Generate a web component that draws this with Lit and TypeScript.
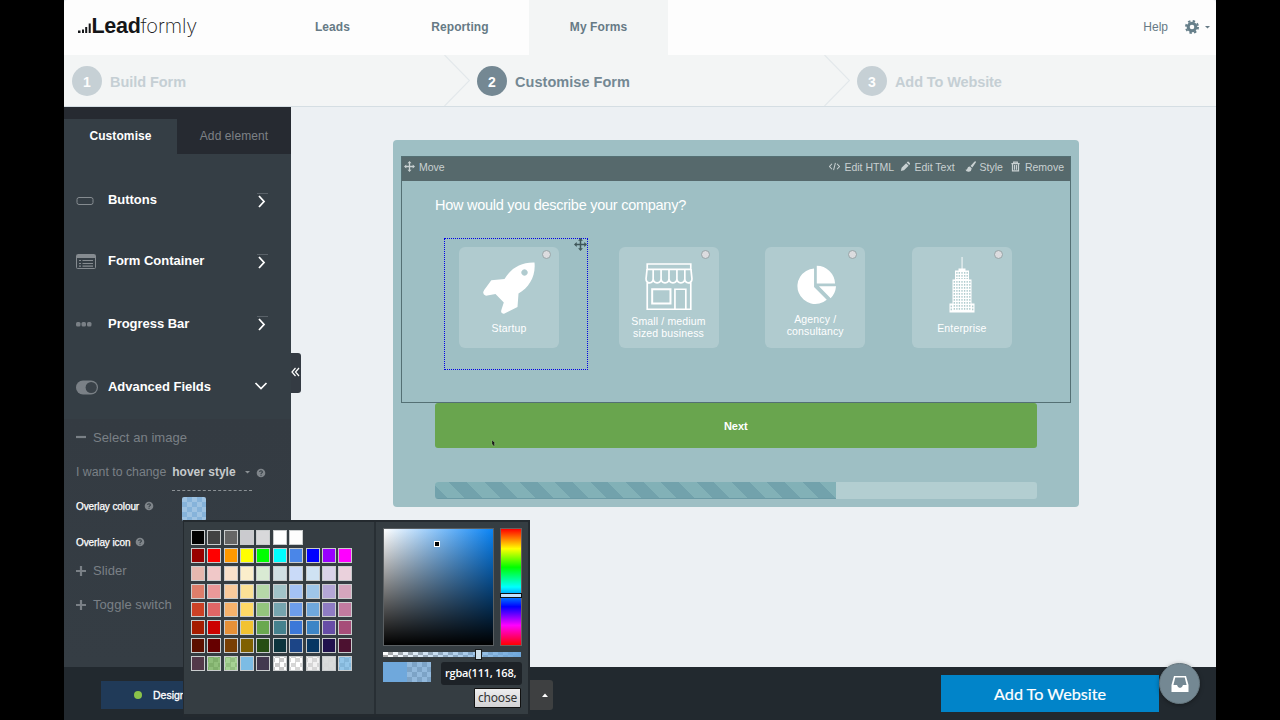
import { LitElement, html, css, svg } from "lit";
import { customElement } from "lit/decorators.js";
import { classMap } from "lit/directives/class-map.js";

const SWATCHES: string[][] = [
  ["#000000", "#434343", "#666666", "#cacace", "#d8d8da", "#ffffff", "#fdfdfd"],
  ["#980000", "#ff0000", "#ff9900", "#ffff00", "#00ff00", "#00ffff", "#4a86e8", "#0000ff", "#9900ff", "#ff00ff"],
  ["#e6b8af", "#f0c8c8", "#f8e1ca", "#fbeecb", "#d9ead3", "#d0e0e3", "#c9daf8", "#cfe2f3", "#d9d2e9", "#ead1dc"],
  ["#dd7e6b", "#ea9999", "#f9cb9c", "#fbe196", "#b6d7a8", "#a2c4c9", "#a4c2f4", "#9fc5e8", "#b4a7d6", "#d5a6bd"],
  ["#cc4125", "#e06666", "#f6b26b", "#ffd966", "#93c47d", "#76a5af", "#6d9eeb", "#6fa8dc", "#8e7cc3", "#c27ba0"],
  ["#a61c00", "#cc0000", "#e69138", "#f1c232", "#6aa84f", "#45818e", "#3c78d8", "#3d85c6", "#674ea7", "#a64d79"],
  ["#5b0f00", "#660000", "#783f04", "#7f6000", "#274e13", "#0c343d", "#1c4587", "#073763", "#20124d", "#4c1130"],
  ["#53394a", "rgba(106,168,79,.75)", "rgba(126,188,99,.68)", "#7cbce4", "#43394f", "rgba(255,255,255,.1)", "rgba(255,255,255,.3)", "rgba(230,230,230,.55)", "rgba(216,218,218,.94)", "rgba(111,178,224,.75)"],
];

const moveIcon = svg`<svg class="ico" viewBox="0 0 12 12"><path fill="currentColor" d="M6 0 8.2 2.5H6.7V5.3H9.5V3.8L12 6 9.5 8.2V6.7H6.7V9.5H8.2L6 12 3.8 9.5H5.3V6.7H2.5V8.2L0 6 2.5 3.8V5.3H5.3V2.5H3.8Z"/></svg>`;
const codeIcon = svg`<svg class="ico" viewBox="0 0 12 12"><path fill="none" stroke="currentColor" stroke-width="1.100" d="M3.3 3 .6 6l2.700 3M8.700 3l2.700 3-2.700 3M7 2 5 10"/></svg>`;
const pencilIcon = svg`<svg class="ico" viewBox="0 0 12 12"><path fill="currentColor" d="M1 11l.8-3.600L7 2.200l2.800 2.800L4.600 10.200ZM7.700 1.500l.9-.9q.6-.5 1.200 0l1.600 1.600q.5.6 0 1.200l-.9.9Z"/></svg>`;
const brushIcon = svg`<svg class="ico" viewBox="0 0 12 12"><path fill="currentColor" d="M11.300.3q.9.500.5 1.400L8 7 6 5.400 10.200.7q.6-.6 1.100-.4ZM5.200 6.100l2.100 1.800Q7.500 11 4.300 11.700 1.500 12 .3 9.300q1.500.6 2-.700.7-2.500 2.900-2.500Z"/></svg>`;
const trashIcon = svg`<svg class="ico" viewBox="0 0 12 12"><path fill="none" stroke="currentColor" stroke-width="1.300" d="M1.500 2.800H10.500M4 2.500V1.200H8V2.500M2.700 3V10.800H9.300V3M4.900 4.300V9.500M7.100 4.300V9.500"/></svg>`;
const helpIcon = svg`<svg class="help" viewBox="0 0 10 10"><circle cx="5" cy="5" r="4.300" fill="#7f858a"/><path d="M3.600 4Q3.700 2.700 5 2.700T6.400 4C6.400 4.900 5 4.900 5 6M5 6.800V7.800" fill="none" stroke="#353e45" stroke-width="1.100"/></svg>`;

const rocket = svg`<svg class="art" viewBox="0 0 52 52"><path fill="#fff" fill-rule="evenodd" d="M51.500.4C53 14 46 26 35.500 31.500L34.500 45 21 51.700Q17 52 18.500 47.500L20.800 40.500 12.500 32 3 33.800Q-1.500 32 1.200 28L8.300 18.300 21.500 17C28 6 38 0 51.500.4ZM41.500 7.300a3.200 3.200 0 1 0 .01 0Z"/></svg>`;
const store = svg`<svg class="art" viewBox="0 0 48 48"><g fill="none" stroke="#fff" stroke-width="1.700"><path d="M2 6.500V1H46V6.500ZM1.800 6.500.8 16q0 4 3.600 4T8 16q0 4 4 4t4-4q0 4 4 4t4-4q0 4 4 4t4-4q0 4 4 4t4-4q0 4 3.600 4t3.600-4L46.200 6.500M8 16V6.500M16 16V6.500M24 16V6.500M32 16V6.500M40 16V6.500M2 19V46.800H46V19"/><path stroke-width="2" d="M7 26.500H25.500V41H7Z"/><path d="M30 46.500V26.500H41V46.500"/></g></svg>`;
const pie = svg`<svg class="art" viewBox="0 0 42 40"><path fill="#fff" d="M18.500 3V22L31.500 35A18.200 18.200 0 1 1 18.500 3ZM21.300.3A19 19 0 0 1 40 18.400H21.300ZM23.500 21.300H41Q40.500 28.500 35.500 33.500Z"/></svg>`;
const tower = svg`<svg class="art" viewBox="0 0 26 56"><path fill="#fff" d="M12.600 0h.9V11.500H16.500V13.500H20V22.500H22.500V46.500H25.500V55.500H.5V46.500H3.500V22.500H6V13.500H9.500V11.500H12.600Z"/><path d="M7.900 15V22M10.300 15V22M13 15V22M15.700 15V22M18.200 15V22M5.300 24V54M7.900 24V54M10.400 24V54M13 24V54M15.600 24V54M18.200 24V54M20.800 24V54M2.300 48.500V54M23.700 48.500V54" stroke="#b0ccce" stroke-width="1.300" stroke-dasharray="1.700 1.300"/></svg>`;

@customElement("colour-picker")
export class ColourPicker extends LitElement {
  static styles = css`
    :host { display: flex; box-sizing: border-box; width: 347px; height: 197px; border: 2px solid #242a2f; border-left-width: 1px; border-bottom-width: 3px; background: #353d42; }
    .palette { width: 192px; box-sizing: border-box; border-right: 2px solid #282f34; padding: 8px 0 0 7px; display: flex; flex-direction: column; gap: 3px; }
    .row { display: flex; gap: 2.370px; }
    .sw { width: 14px; height: 15px; box-sizing: border-box; border: 1px solid #c9cccd; background: repeating-conic-gradient(#c4c4c4 0 25%, #fff 0 50%) 1px 1px / 9px 9px; background-clip: padding-box; display: flex; }
    .fill { flex: 1; }
    .side { padding: 6px 0 0 7px; width: 141px; }
    .top { display: flex; gap: 6px; }
    .sat { position: relative; width: 111px; height: 118px; box-sizing: border-box; border: 1px solid #5a5f62; background: linear-gradient(to top, #000, transparent), linear-gradient(to right, #fff, #0a84f5); }
    .dot { position: absolute; left: 50px; top: 12px; width: 4px; height: 4px; background: #000; border: 1px solid #fff; }
    .hue { position: relative; width: 22px; height: 118px; box-sizing: border-box; border: 1px solid #6a5f5e; background: linear-gradient(#f00, #ff0 17%, #0f0 33%, #0ff 50%, #00f 67%, #f0f 83%, #f00); }
    .hue-mark { position: absolute; left: -1px; right: -1px; top: 64px; height: 3px; border: 1px solid #111; background: #bfe2ff; }
    .alpha { position: relative; width: 138px; height: 5px; margin-top: 5.500px; background: linear-gradient(to right, transparent, #6fa8dc), repeating-conic-gradient(#aaa 0 25%, #fff 0 50%) 0 0 / 10px 6px; }
    .alpha-mark { position: absolute; left: 92px; top: -3px; width: 5px; height: 9px; border: 1px solid #16191b; background: #cfe0ea; }
    .values { display: flex; margin-top: 5.500px; gap: 10px; }
    .preview { display: flex; width: 48px; height: 20px; }
    .solid { flex: 1; background: #6fa8dc; }
    .mixed { flex: 1; background: linear-gradient(rgba(111,168,220,.68), rgba(111,168,220,.68)), repeating-conic-gradient(#999 0 25%, #ddd 0 50%) 0 0 / 10px 10px; }
    .value { width: 81px; height: 23px; box-sizing: border-box; border-radius: 3px; background: #1d2227; color: #fff; font: 600 11px/22px "Open Sans", "Noto Sans", sans-serif; letter-spacing: -.2px; padding-left: 4px; white-space: pre; overflow: hidden; }
    .choose { display: block; width: 47px; height: 20px; box-sizing: border-box; margin: 2.500px 0 0 91px; border: 1px solid #111; background: linear-gradient(#eee, #d3d3d5); color: #333; font: 12px/17px "Noto Sans", sans-serif; letter-spacing: -.2px; text-align: center; padding: 0; border-radius: 1px; }
  `;
  render() {
    return html`
      <div class="palette">
        ${SWATCHES.map((r) => html`<div class="row">${r.map((c) => html`<div class="sw"><div class="fill" style="background:${c}"></div></div>`)}</div>`)}
      </div>
      <div class="side">
        <div class="top">
          <div class="sat"><div class="dot"></div></div>
          <div class="hue"><div class="hue-mark"></div></div>
        </div>
        <div class="alpha"><div class="alpha-mark"></div></div>
        <div class="values">
          <div class="preview"><div class="solid"></div><div class="mixed"></div></div>
          <div class="value">rgba(111, 168,</div>
        </div>
        <button class="choose">choose</button>
      </div>`;
  }
}

@customElement("app-root")
export class AppRoot extends LitElement {
  static styles = css`
    :host { display: block; width: 1280px; height: 720px; box-sizing: border-box; padding: 0 64px; background: #000; overflow: hidden; font-family: "Liberation Sans", Arial, sans-serif; font-size: 12px; }
    * { box-sizing: border-box; }
    svg { display: block; flex: none; }
    .app { position: relative; width: 1152px; height: 720px; display: flex; flex-direction: column; background: #ecf0f3; }

    header { display: flex; height: 55px; background: #fdfdfd; border-radius: 4px 4px 0 0; color: #667a85; }
    .brand { width: 210px; padding: 13px 0 0 14px; display: flex; height: 55px; color: #151618; }
    .bars { width: 15px; height: 15px; margin-top: 5px; }
    .lead { font-weight: 700; font-size: 21.500px; line-height: 26px; letter-spacing: -.3px; margin-left: -1.500px; }
    .formly { font-family: Inter, "Liberation Sans", sans-serif; font-weight: 200; font-size: 20px; line-height: 26px; letter-spacing: -.15px; }
    .tab { display: flex; align-items: center; justify-content: center; font-weight: 700; letter-spacing: .08px; width: 138px; padding-bottom: 2px; }
    .tab.first { width: 117px; }
    .tab.on { width: 139px; background: #f3f5f5; }
    .tools { margin-left: auto; display: flex; align-items: center; padding: 0 6px 2px 0; }
    .gear { width: 14px; height: 14px; margin: 0 6px 0 17px; }
    .caret { width: 5px; height: 3px; }
    .tools .caret { margin-top: 2px; }

    .steps { display: flex; height: 52px; background: #f3f5f5; border-bottom: 1px solid #d5dee3; font-weight: 700; font-size: 14.500px; color: #c5cfd4; }
    .step { display: flex; align-items: center; gap: 8px; padding-left: 8px; width: 405px; }
    .step.two { width: 380px; color: #748893; }
    .step.last { flex: 1; }
    .num { width: 30px; height: 30px; border-radius: 15px; background: #c6d0d5; color: #fdfdfd; display: flex; align-items: center; justify-content: center; font-size: 14px; margin-top: 1px; padding-top: 1px; }
    .two .num { background: #748893; }
    .label { margin-top: 2px; letter-spacing: -.05px; }
    .two .label { letter-spacing: .04px; }
    .last .label { letter-spacing: -.1px; }
    .arrow { margin-left: auto; width: 26px; height: 51px; margin-right: -1px; }

    .body { display: flex; height: 560px; }
    aside { position: relative; width: 227px; background: linear-gradient(#353e45 0 312px, #343b42 312px, #353d44); color: #fff; }
    .stabs { display: flex; height: 47px; background: #262a31; align-items: flex-end; }
    .stab { width: 113px; height: 35px; display: flex; align-items: center; justify-content: center; letter-spacing: .1px; padding-bottom: 2px; }
    .stab.on { background: #353e45; font-weight: 700; }
    .stab.off { width: 114px; color: #7d8186; }
    .sections { padding-top: 14px; }
    .sec { display: flex; align-items: center; height: 62px; padding: 0 23px 0 12px; font-weight: 700; font-size: 13px; letter-spacing: -.03px; }
    .sec.b { height: 61px; } .sec.c { height: 64px; }
    .sicon { width: 22px; height: 16px; margin: 3px 10px 0 0; }
    .chev { width: 12px; height: 16px; margin-left: auto; margin-top: 4px; }
    .sec.b .chev, .sec.c .chev { margin-top: 2px; }
    .chev.down { margin-top: 2px; }
    .grp { display: flex; align-items: center; height: 27px; gap: 7px; padding-left: 12px; font-size: 13px; color: #7a8086; letter-spacing: .06px; }
    .grp.sel { height: 36px; margin-top: 2px; } .grp.tog { height: 41px; }
    .want { display: flex; height: 35px; margin-left: 12px; align-items: center; color: #7a8086; font-size: 12.300px; line-height: 35px; }
    .pick { display: flex; align-items: center; width: 80px; height: 36px; margin-left: 6px; justify-content: space-between; border-bottom: 1px dashed #8b9195; font-weight: 700; font-size: 12px; color: #c6cacc; margin-top: 1px; padding-right: 2px; }
    .help { width: 10px; height: 10px; }
    .want .help { margin-left: 4px; }
    .opt { display: flex; align-items: center; height: 37px; padding: 0 0 5px 12px; font-size: 10px; letter-spacing: -.1px; gap: 5px; -webkit-text-stroke: .25px #fff; }
    .opt.icon { height: 30px; padding-bottom: 0; }
    .chip { width: 24px; height: 24px; border-radius: 2px; margin: 6px 0 0 23px; background: repeating-conic-gradient(#86b3da 0 25%, #9fc3e2 0 50%) 0 0 / 10px 10px; }
    .fold { position: absolute; left: 227px; top: 246px; width: 10px; height: 40px; border-radius: 0 3px 3px 0; background: #343b43; display: flex; align-items: center; padding-bottom: 2px; }

    main { flex: 1; padding: 32.500px 0 0 101.500px; }
    .form { width: 686.500px; height: 367px; border-radius: 4px; background: #9ebfc4; padding: 16.500px 8.500px 0; }
    .frame { height: 247px; border: 1px solid #547074; width: 670px; }
    .bar { display: flex; align-items: center; height: 24px; background: #56696c; color: #c9d1d2; font-size: 10.500px; padding: 0 6px 5px 2px; }
    .act { display: flex; align-items: center; gap: 4px; }
    .act.move { margin: 0 auto 0 0; }
    .act.text { margin-left: 6px; }
    .act.style { margin-left: 10px; }
    .act.remove { margin-left: 7px; }
    .ico { width: 11px; height: 11px; }
    .text .ico { width: 10.500px; }
    .q { color: #fff; font-size: 14.500px; letter-spacing: -.26px; line-height: 20px; margin: 14px 0 0 33px; }
    .cards { display: flex; margin: 22.500px 0 0 42px; gap: 46.700px; }
    .pickframe { position: relative; width: 144px; height: 132px; border: 1px dotted #0000e6; padding: 8.500px 14px; margin-right: -16.200px; }
    .card { position: relative; width: 100px; height: 101px; border-radius: 6px; background: rgba(255,255,255,.19); display: flex; flex-direction: column; align-items: center; color: #fff; font-size: 10.500px; letter-spacing: .15px; line-height: 12.300px; text-align: center; white-space: pre-line; }
    .cards > .card { margin-top: 9.500px; }
    .radio { position: absolute; right: 8.500px; top: 3px; width: 9px; height: 9px; border-radius: 5px; border: 1px solid #97a5a8; background: #dcdcdf; }
    .holder { display: flex; }
    .rocket { padding: 15px 0 8px; } .rocket .art { width: 52px; height: 52px; }
    .store { padding: 15.500px 0 4.500px; } .store .art { width: 48px; height: 47.500px; }
    .pie { padding: 18px 0 7.500px 2px; } .pie .art { width: 41px; height: 40px; }
    .tower { padding: 10px 0 9px 1px; } .tower .art { width: 26px; height: 56px; }
    .grab { position: absolute; right: 0; top: -1px; color: #3f5659; }
    .grab .ico { width: 13px; height: 13px; }
    .next { display: flex; align-items: center; justify-content: center; width: 602.500px; height: 45px; margin-left: 33.500px; background: #69a54e; border-radius: 3px; color: #fff; font-weight: 700; font-size: 11px; letter-spacing: -.05px; }
    .track { width: 602px; height: 17px; margin: 34px 0 0 33.500px; background: #b3ced1; border-radius: 3px; overflow: hidden; }
    .prog { height: 17px; border-bottom: 1px solid #6a9aa5; background: repeating-linear-gradient(45deg, #72a2ac 0 8.500px, #82b1b7 8.500px 21px, #72a2ac 21px 25px); }

    footer { display: flex; height: 53px; background: #22292f; }
    .design { display: flex; align-items: center; width: 430px; height: 28px; margin: 14px 0 0 37px; background: #203a58; color: #fff; font-size: 10.500px; padding: 0 0 1px 33px; gap: 11px; -webkit-text-stroke: .3px #fff; }
    .live { width: 8px; height: 8px; border-radius: 4px; background: #8bc34a; }
    .more { width: 24px; height: 30px; margin: 12.500px 0 0 -2px; background: #3e4041; border-radius: 0 3px 3px 0; display: flex; align-items: center; padding-left: 13px; }
    .cta { width: 218px; height: 37px; margin: 8px 0 0 388px; background: #0184c9; color: #fff; font: 16.200px/36px Lato, sans-serif; text-align: center; border: 0; padding: 0; -webkit-text-stroke: .2px #fff; }
    .chat { position: absolute; left: 1095px; top: 663px; width: 41px; height: 41px; border-radius: 50%; background: #748893; border: 1px solid #66777f; display: flex; align-items: center; justify-content: center; box-shadow: 0 1px 4px rgba(0,0,0,.35); }
    .picker { position: absolute; left: 119px; top: 520px; }
    .pointer { position: absolute; left: 427px; top: 439px; width: 5px; height: 8px; }
  `;

  private chevron(down = false) {
    return down
      ? html`<svg class="chev down" viewBox="0 0 12 16" overflow="visible"><path d="M-.5 4 5 9.500 10.500 4" fill="none" stroke="#fff" stroke-width="1.700"/></svg>`
      : html`<svg class="chev" viewBox="0 0 12 16"><path d="M1 .5H12" stroke="#596168" stroke-width="1"/><path d="M3 3 8 8.500 3 14" fill="none" stroke="#fff" stroke-width="1.800"/></svg>`;
  }

  private card(kind: string, art: unknown, label: string) {
    return html`<div class="card"><span class="radio"></span>
      <div class=${classMap({ holder: true, [kind]: true })}>${art}</div><span>${label}</span></div>`;
  }

  render() {
    const plus = html`<svg width="10" height="10" viewBox="0 0 10 10"><path d="M0 5H10M5 0V10" stroke="#7a8086" stroke-width="2.200"/></svg>`;
    return html`
      <div class="app">
        <header>
          <div class="brand">
            <svg class="bars" viewBox="0 0 15 15"><path d="M0 12.500H2.500V15H0ZM4 11.500H6V15H4ZM7.200 9H9.200V15H7.200ZM10.700 5.500H12.700V15H10.700Z" fill="#151618"/></svg>
            <span class="lead">Lead</span><span class="formly">formly</span>
          </div>
          <div class="tab first">Leads</div>
          <div class="tab">Reporting</div>
          <div class="tab on">My Forms</div>
          <div class="tools">Help
            <svg class="gear" viewBox="0 0 14 14"><circle cx="7" cy="7" r="3.800" fill="none" stroke="#667f8a" stroke-width="3"/><circle cx="7" cy="7" r="6" fill="none" stroke="#667f8a" stroke-width="2" stroke-dasharray="2.400 2.312"/></svg>
            <svg class="caret" viewBox="0 0 5 3"><path d="M0 0H5L2.500 2.500Z" fill="#667a85"/></svg>
          </div>
        </header>
        <div class="steps">
          <div class="step one"><span class="num">1</span><span class="label">Build Form</span>
            <svg class="arrow" viewBox="0 0 26 51"><path d="M.5 0 25.500 25.500.5 51" fill="none" stroke="#e3e8eb" stroke-width="1.200"/></svg></div>
          <div class="step two"><span class="num">2</span><span class="label">Customise Form</span>
            <svg class="arrow" viewBox="0 0 26 51"><path d="M.5 0 25.500 25.500.5 51" fill="none" stroke="#e3e8eb" stroke-width="1.200"/></svg></div>
          <div class="step last"><span class="num">3</span><span class="label">Add To Website</span></div>
        </div>
        <div class="body">
          <aside>
            <div class="stabs"><div class="stab on">Customise</div><div class="stab off">Add element</div></div>
            <div class="sections">
              <div class="sec"><svg class="sicon" viewBox="0 0 22 16"><rect x="1" y="4.500" width="16" height="7" rx="2" fill="none" stroke="#858b90"/></svg>Buttons${this.chevron()}</div>
              <div class="sec b"><svg class="sicon" viewBox="0 0 22 16"><rect x=".5" y=".5" width="19" height="14" rx="1" fill="none" stroke="#858b90"/><path d="M1 2.500H19" stroke="#858b90" stroke-width="3"/><path d="M3 6.500H5M6.500 6.500H17M3 9.500H5M6.500 9.500H17M3 12.200H5M6.500 12.200H17" stroke="#858b90" stroke-width="1.200"/></svg>Form Container${this.chevron()}</div>
              <div class="sec c"><svg class="sicon" viewBox="0 0 22 16"><g fill="#7a8086"><rect y="5" width="4.500" height="4.500" rx="1.500"/><rect x="5.500" y="5" width="4.500" height="4.500" rx="1.500"/><rect x="11" y="5" width="4.500" height="4.500" rx="1.500"/></g></svg>Progress Bar${this.chevron()}</div>
              <div class="sec"><svg class="sicon" viewBox="0 0 22 16"><rect y=".5" width="22" height="14" rx="7" fill="#7a8086"/><circle cx="15.200" cy="7.500" r="5.600" fill="#3a4249"/></svg>Advanced Fields${this.chevron(true)}</div>
            </div>
            <div class="grp sel"><svg width="10" height="10" viewBox="0 0 10 10"><path d="M0 5H10" stroke="#7a8086" stroke-width="2.200"/></svg>Select an image</div>
            <div class="want">I want to change<div class="pick">hover style<svg class="caret" viewBox="0 0 5 3"><path d="M0 0H5L2.500 2.500Z" fill="#8b9195"/></svg></div>${helpIcon}</div>
            <div class="opt">Overlay colour ${helpIcon}<div class="chip"></div></div>
            <div class="opt icon">Overlay icon ${helpIcon}</div>
            <div class="grp">${plus}Slider</div>
            <div class="grp tog">${plus}Toggle switch</div>
            <div class="fold"><svg width="9" height="10" viewBox="0 0 9 10"><path d="M4.500 1 1 5l3.500 4M8 1 4.500 5 8 9" fill="none" stroke="#fff" stroke-width="1.200"/></svg></div>
          </aside>
          <main>
            <div class="form">
              <div class="frame">
                <div class="bar">
                  <div class="act move">${moveIcon}Move</div>
                  <div class="act">${codeIcon}Edit HTML</div>
                  <div class="act text">${pencilIcon}Edit Text</div>
                  <div class="act style">${brushIcon}Style</div>
                  <div class="act remove">${trashIcon}Remove</div>
                </div>
                <div class="q">How would you describe your company?</div>
                <div class="cards">
                  <div class="pickframe">${this.card("rocket", rocket, "Startup")}<div class="grab">${moveIcon}</div></div>
                  ${this.card("store", store, "Small / medium\nsized business")}
                  ${this.card("pie", pie, "Agency /\nconsultancy")}
                  ${this.card("tower", tower, "Enterprise")}
                </div>
              </div>
              <div class="next">Next</div>
              <div class="track"><div class="prog" style="width:${(2 / 3) * 100}%"></div></div>
            </div>
          </main>
        </div>
        <footer>
          <div class="design"><span class="live"></span>Design</div>
          <div class="more"><svg width="6" height="4" viewBox="0 0 6 4"><path d="M0 4 3 .5 6 4Z" fill="#fff"/></svg></div>
          <button class="cta">Add To Website</button>
        </footer>
        <div class="chat"><svg width="18" height="16" viewBox="0 0 18 16"><path fill="#fff" fill-rule="evenodd" d="M3 0H15L17.500 9V16H.5V9ZM4.300 1.600 2.400 9H6q.8 3 3 3t3-3h3.600L13.700 1.600Z"/></svg></div>
        <svg class="pointer" viewBox="0 0 5 8"><path d="M1 1 4.500 4.500H3L3.800 6.800 2.500 7 1.800 5.500 1 6Z" fill="#111" stroke="#b9d6a8" stroke-width=".3"/></svg>
        <colour-picker class="picker"></colour-picker>
      </div>`;
  }
}
